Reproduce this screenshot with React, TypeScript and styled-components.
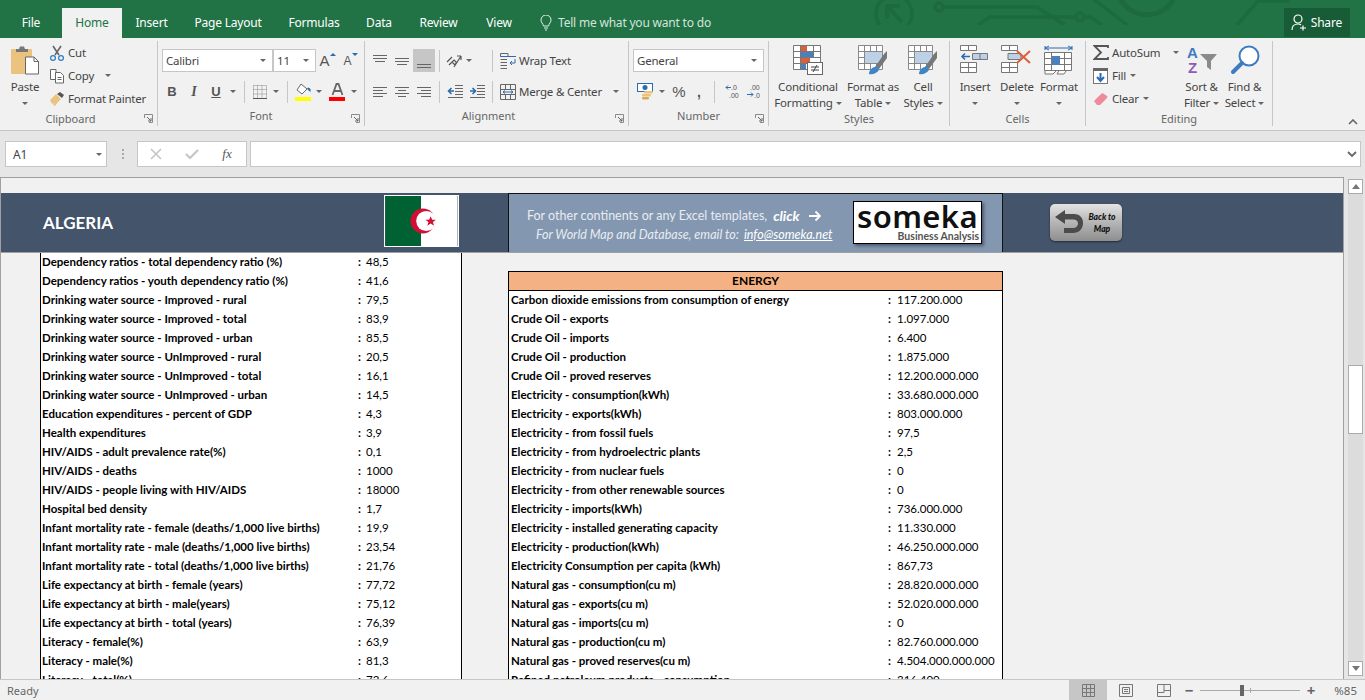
import React from 'react';
import styled, { createGlobalStyle } from 'styled-components';

const UI_FONT = '"Noto Sans", "Open Sans", sans-serif';
const CELL_FONT = 'Lato, "Open Sans", sans-serif';

const GlobalStyle = createGlobalStyle`
  html, body { margin: 0; padding: 0; overflow: hidden; background: #f1f1f1; }
  #root { width: 1365px; height: 700px; }
  * { box-sizing: border-box; }
`;

const Page = styled.div`
  display: flex;
  flex-direction: column;
  width: 1365px;
  height: 700px;
  overflow: hidden;
  font-family: ${UI_FONT};
  font-size: 11.5px;
  letter-spacing: -0.2px;
  color: #444;
`;

/* title bar */
const TitleBar = styled.div`
  position: relative;
  flex: none;
  display: flex;
  height: 38px;
  padding-top: 8px;
  background: #217346;
  color: #fff;
`;
const Tab = styled.div<{ $w: number; $active?: boolean }>`
  display: flex;
  align-items: center;
  justify-content: center;
  width: ${({ $w }) => $w}px;
  height: 30px;
  padding-bottom: 1px;
  font-size: 12px;
  background: ${({ $active }) => ($active ? '#f1f1f1' : 'transparent')};
  color: ${({ $active }) => ($active ? '#217346' : '#fff')};
`;
const TellMe = styled.div`
  display: flex;
  align-items: center;
  gap: 6px;
  height: 30px;
  margin-left: 14px;
  padding-bottom: 1px;
  font-size: 12px;
  color: #d3e3da;
`;
const Share = styled.div`
  display: flex;
  align-items: center;
  gap: 4px;
  height: 29px;
  margin-left: auto;
  margin-right: 15px;
  padding: 0 8px 0 7px;
  font-size: 12px;
  background: #185c37;
`;
const Watermark = styled.svg`
  position: absolute;
  left: 850px;
  top: 0;
`;

/* ribbon */
const Ribbon = styled.div`
  position: relative;
  flex: none;
  display: flex;
  height: 93px;
  padding-top: 3px;
  background: #f1f1f1;
  border-bottom: 1px solid #c6c6c6;
`;
const Group = styled.section<{ $w: number }>`
  position: relative;
  display: flex;
  flex-direction: column;
  width: ${({ $w }) => $w}px;
  height: 85px;
  border-right: 1px solid #c6c6c6;
`;
const GroupBody = styled.div<{ $pad?: number; $col?: boolean }>`
  display: flex;
  flex: 1;
  flex-direction: ${({ $col }) => ($col ? 'column' : 'row')};
  padding-left: ${({ $pad }) => $pad ?? 0}px;
`;
const GroupLabel = styled.div<{ $shift?: number }>`
  height: 15px;
  margin-bottom: 3px;
  padding-right: ${({ $shift }) => $shift ?? 0}px;
  text-align: center;
  font-size: 11px;
  line-height: 15px;
  letter-spacing: 0;
  color: #666;
`;
const Launcher = styled.svg`
  position: absolute;
  right: 4px;
  bottom: 3px;
`;
const BigButton = styled.div<{ $w: number }>`
  display: flex;
  flex: none;
  flex-direction: column;
  align-items: center;
  width: ${({ $w }) => $w}px;
  padding-top: 4px;
  line-height: 16px;
`;
const BigIcon = styled.div`
  display: flex;
  justify-content: center;
  height: 30px;
  margin-bottom: 4px;
`;
const BigText = styled.div`
  white-space: nowrap;
  text-align: center;
`;
const CaretLine = styled.div`
  display: flex;
  align-items: center;
  justify-content: center;
  height: 16px;
  gap: 3px;
  white-space: nowrap;
`;
const SmallColumn = styled.div<{ $ml?: number; $w?: number }>`
  display: flex;
  flex: none;
  flex-direction: column;
  margin-left: ${({ $ml }) => $ml ?? 0}px;
  width: ${({ $w }) => ($w ? `${$w}px` : 'auto')};
`;
const SmallRow = styled.div`
  display: flex;
  align-items: center;
  gap: 3px;
  height: 23px;
  white-space: nowrap;
`;
const SmallIcon = styled.span`
  display: flex;
  flex: none;
  justify-content: center;
  width: 17px;
`;
const Caret = styled.span<{ $ml?: number }>`
  flex: none;
  width: 0;
  height: 0;
  margin-left: ${({ $ml }) => $ml ?? 0}px;
  border-left: 3px solid transparent;
  border-right: 3px solid transparent;
  border-top: 3px solid #666;
`;
const ToolRow = styled.div<{ $mt: number }>`
  display: flex;
  align-items: center;
  margin-top: ${({ $mt }) => $mt}px;
  height: 23px;
`;
const Tool = styled.div<{ $w: number; $on?: boolean }>`
  display: flex;
  flex: none;
  align-items: center;
  justify-content: center;
  width: ${({ $w }) => $w}px;
  height: 23px;
  background: ${({ $on }) => ($on ? '#c6c6c6' : 'transparent')};
`;
const ToolSep = styled.span<{ $l: number; $r: number }>`
  flex: none;
  width: 1px;
  height: 22px;
  margin: 0 ${({ $r }) => $r}px 0 ${({ $l }) => $l}px;
  background: #c6c6c6;
`;
const Select = styled.div<{ $w: number }>`
  display: flex;
  flex: none;
  align-items: center;
  justify-content: space-between;
  width: ${({ $w }) => $w}px;
  height: 23px;
  padding: 0 6px 0 3px;
  background: #fff;
  border: 1px solid #c6c6c6;
  color: #444;
`;
const GlyphLetter = styled.span<{ $bold?: boolean; $italic?: boolean; $under?: boolean; $size?: number }>`
  font-family: "Liberation Serif", serif;
  font-family: ${({ $italic }) => ($italic ? '"Liberation Serif", serif' : '"Liberation Sans", sans-serif')};
  font-size: ${({ $size }) => $size ?? 13}px;
  font-weight: ${({ $bold }) => ($bold ? 700 : 400)};
  font-style: ${({ $italic }) => ($italic ? 'italic' : 'normal')};
  text-decoration: ${({ $under }) => ($under ? 'underline' : 'none')};
  color: #555;
  letter-spacing: 0;
`;
const ToolText = styled.span`
  margin-left: 3px;
  white-space: nowrap;
`;
const Collapse = styled.svg`
  position: absolute;
  right: 7px;
  bottom: 5px;
`;

/* formula bar */
const FormulaBar = styled.div`
  flex: none;
  display: flex;
  align-items: flex-start;
  height: 46px;
  padding: 10px 4px 0 5px;
  background: #e6e6e6;
`;
const NameBox = styled.div`
  display: flex;
  align-items: center;
  justify-content: space-between;
  width: 102px;
  height: 26px;
  padding: 0 4px 0 7px;
  background: #fff;
  border: 1px solid #c6c6c6;
  font-size: 12px;
`;
const Dots = styled.div`
  display: flex;
  flex-direction: column;
  gap: 2px;
  width: 30px;
  padding: 8px 0 0 15px;
  i { width: 2px; height: 2px; background: #a8a8a8; }
`;
const FormulaTools = styled.div`
  display: flex;
  align-items: center;
  width: 110px;
  height: 26px;
  margin-right: 3px;
  background: #fff;
  border: 1px solid #c6c6c6;
`;
const FormulaInput = styled.div`
  display: flex;
  flex: 1;
  align-items: center;
  justify-content: flex-end;
  height: 26px;
  padding-right: 3px;
  background: #fff;
  border: 1px solid #c6c6c6;
`;

/* worksheet */
const SheetArea = styled.div`
  flex: 1;
  display: flex;
  min-height: 0;
  background: #e6e6e6;
`;
const Sheet = styled.div`
  display: flex;
  flex-direction: column;
  width: 1344px;
  padding-top: 15px;
  background: #f1f1f1;
  border: 1px solid #a0a0a0;
  border-bottom: 0;
  overflow: hidden;
`;
const Banner = styled.div`
  flex: none;
  display: flex;
  height: 60px;
  background: #44546a;
  border-bottom: 1px solid #a0a0a0;
`;
const TitleBlock = styled.div`
  display: flex;
  align-items: center;
  justify-content: space-between;
  width: 507px;
  padding: 0 49px 0 42px;
  font-family: ${CELL_FONT};
  font-size: 17px;
  font-weight: 700;
  letter-spacing: 0;
  color: #fff;
`;
const FlagFrame = styled.svg`
  margin-top: -3px;
  border: 1px solid #fff;
`;
const Promo = styled.div`
  display: flex;
  flex: none;
  width: 495px;
  height: 59px;
  background: #8497b0;
  border: 1px solid #111;
  border-bottom: 0;
  font-family: ${CELL_FONT};
  letter-spacing: 0;
  color: #e8ecf2;
`;
const PromoText = styled.div`
  display: flex;
  flex-direction: column;
  width: 344px;
  padding: 12px 0 0 18px;
  font-size: 12.5px;
`;
const PromoLine = styled.div<{ $indent?: number; $italic?: boolean }>`
  display: flex;
  align-items: center;
  gap: ${({ $italic }) => ($italic ? 5 : 6)}px;
  height: 19px;
  padding-left: ${({ $indent }) => $indent ?? 0}px;
  font-style: ${({ $italic }) => ($italic ? 'italic' : 'normal')};
  white-space: nowrap;
`;
const ClickWord = styled.b`
  font-size: 14px;
  font-style: italic;
  color: #fff;
`;
const MailLink = styled.span`
  text-decoration: underline;
  color: #fff;
`;
const Logo = styled.div`
  position: relative;
  flex: none;
  width: 129px;
  height: 43px;
  margin-top: 7px;
  padding: 0 2px;
  background: #fff;
  border: 1px solid #000;
  box-shadow: 2px 2px 3px rgba(30, 40, 60, 0.55);
  overflow: hidden;
`;
const LogoWord = styled.div`
  font-family: "Noto Sans", sans-serif;
  font-size: 31px;
  font-weight: 600;
  line-height: 28px;
  letter-spacing: 0.4px;
  text-align: center;
  color: #111;
`;
const LogoSub = styled.div`
  font-family: ${CELL_FONT};
  font-size: 10.5px;
  font-weight: 700;
  line-height: 12px;
  text-align: right;
  color: #555;
`;
const BackButton = styled.div`
  display: flex;
  align-items: center;
  flex: none;
  width: 72px;
  height: 37px;
  margin: 11px 0 0 47px;
  padding-left: 3px;
  border-radius: 5px;
  background: linear-gradient(#e4e4e4, #b9b9b9 45%, #8e8e8e);
  box-shadow: 0 1px 2px rgba(0, 0, 0, 0.5);
`;
const BackText = styled.div`
  width: 34px;
  font-family: ${CELL_FONT};
  font-size: 8.5px;
  font-style: italic;
  font-weight: 900;
  line-height: 12px;
  letter-spacing: 0;
  text-align: center;
  color: #111;
`;
const Tables = styled.div`
  flex: 1;
  display: flex;
  align-items: flex-start;
  min-height: 0;
  overflow: hidden;
  padding-left: 39px;
  font-family: ${CELL_FONT};
  font-size: 11.5px;
  letter-spacing: 0;
  color: #000;
`;
const LeftTable = styled.div`
  flex: none;
  width: 422px;
  height: 600px;
  padding-left: 1px;
  background: #fff;
  border: solid #000;
  border-width: 0 1px;
`;
const RightColumn = styled.div`
  flex: none;
  width: 495px;
  margin: 18px 0 0 46px;
`;
const EnergyHead = styled.div`
  height: 20px;
  background: #f4b183;
  border: 1px solid #000;
  font-size: 12px;
  font-weight: 700;
  line-height: 18px;
  text-align: center;
`;
const RightTable = styled.div`
  height: 600px;
  padding-left: 2px;
  background: #fff;
  border: solid #000;
  border-width: 0 1px;
`;
const Row = styled.div<{ $label: number; $colon: number }>`
  display: grid;
  grid-template-columns: ${({ $label }) => $label}px ${({ $colon }) => $colon}px 1fr;
  height: 19px;
  line-height: 18px;
  white-space: nowrap;
`;
const RowLabel = styled.span`
  font-weight: 700;
`;
const RowColon = styled.span`
  font-weight: 700;
`;

/* scrollbar + status */
const ScrollBar = styled.div`
  position: relative;
  display: flex;
  flex-direction: column;
  justify-content: space-between;
  width: 15px;
  margin: 2px 0 3px 4px;
  background: #dcdcdc;
`;
const ScrollButton = styled.div`
  display: flex;
  align-items: center;
  justify-content: center;
  height: 15px;
  background: #fff;
  border: 1px solid #ababab;
`;
const ScrollThumb = styled.div`
  position: absolute;
  left: 0;
  top: 186px;
  width: 15px;
  height: 69px;
  background: #fff;
  border: 1px solid #ababab;
`;
const StatusBar = styled.div`
  flex: none;
  display: flex;
  align-items: center;
  height: 21px;
  padding-left: 7px;
  background: #f1f1f1;
  border-top: 1px solid #c6c6c6;
  font-size: 11px;
  letter-spacing: 0;
  color: #666;
`;
const StatusRight = styled.div`
  display: flex;
  align-items: center;
  height: 20px;
  margin-left: auto;
`;
const ViewButton = styled.div<{ $on?: boolean }>`
  display: flex;
  align-items: center;
  justify-content: center;
  width: 38px;
  height: 20px;
  margin-right: ${({ $on }) => ($on ? 0 : 0)}px;
  background: ${({ $on }) => ($on ? '#c6c6c6' : 'transparent')};
`;
const ZoomTrack = styled.div`
  position: relative;
  width: 100px;
  height: 1px;
  margin: 0 5px;
  background: #a8a8a8;
`;
const ZoomThumb = styled.span`
  position: absolute;
  left: 40px;
  top: -5px;
  width: 4px;
  height: 11px;
  background: #666;
`;
const ZoomTick = styled.span`
  position: absolute;
  left: 50px;
  top: -2px;
  width: 1px;
  height: 5px;
  background: #a8a8a8;
`;
const ZoomSign = styled.span`
  width: 12px;
  text-align: center;
  font-size: 15px;
  font-weight: 700;
  line-height: 14px;
  color: #666;
`;
const ZoomValue = styled.span`
  width: 48px;
  padding-right: 8px;
  text-align: right;
  font-size: 11.5px;
`;

const lines = (ys: number[], x1: number, x2: number) =>
  ys.map((y) => <path key={y} d={`M${x1} ${y + 0.5}H${x2}`} stroke="#666" />);

const AlignV = ({ at }: { at: 'top' | 'mid' | 'bot' }) => {
  const start = at === 'top' ? 2 : at === 'mid' ? 5 : 11;
  return <svg width="16" height="16">{lines([start, start + 3, start + (at === 'bot' ? 3 : 6)], 1, 15).slice(0, at === 'bot' ? 2 : 2)}{at === 'bot' ? null : lines([start + 6], 3, 13)}</svg>;
};
const AlignH = ({ at }: { at: 'l' | 'c' | 'r' }) => (
  <svg width="16" height="14">
    {[2, 5, 8, 11].map((y, i) => {
      const short = i % 2 === 1;
      const x1 = at === 'l' ? 1 : at === 'c' ? (short ? 4 : 1) : short ? 5 : 1;
      const x2 = at === 'l' ? (short ? 11 : 15) : at === 'c' ? (short ? 12 : 15) : 15;
      return <path key={y} d={`M${x1} ${y + 0.5}H${x2}`} stroke="#666" />;
    })}
  </svg>
);
const Indent = ({ dir }: { dir: 'in' | 'out' }) => (
  <svg width="17" height="14">
    <path d="M8 1.5H16M8 4.5H16M8 7.5H16M8 10.5H16M1 13.5H16" stroke="#666" transform="translate(0 -1)" />
    {dir === 'out'
      ? <path d="M7 6H2M4.5 3L1.5 6L4.5 9" stroke="#2b6cb0" strokeWidth="1.6" fill="none" />
      : <path d="M1 6H6M3.5 3L6.5 6L3.5 9" stroke="#2b6cb0" strokeWidth="1.6" fill="none" />}
  </svg>
);
const PasteIcon = () => (
  <svg width="30" height="30" viewBox="0 0 30 30">
    <rect x="1" y="4" width="21" height="25" rx="1" fill="#eac37f" />
    <path d="M6 4H9L10 1.5H14L15 4H18V7H6Z" fill="#777" />
    <path d="M15.5 12H24L28.5 16.5V29H15.5Z" fill="#fff" stroke="#666" />
    <path d="M24 12V16.5H28.5" fill="none" stroke="#666" />
  </svg>
);
const CutIcon = () => (
  <svg width="16" height="16" viewBox="0 0 16 16">
    <path d="M4 1L10 10M12 1L6 10" stroke="#666" strokeWidth="1.6" />
    <circle cx="4" cy="13" r="2.4" fill="none" stroke="#2b7cc4" strokeWidth="1.2" />
    <circle cx="12" cy="13" r="2.4" fill="none" stroke="#2b7cc4" strokeWidth="1.2" />
  </svg>
);
const CopyIcon = () => (
  <svg width="16" height="16" viewBox="0 0 16 16">
    <path d="M1.5 1.5H7V11.5H1.5Z" fill="#fff" stroke="#666" />
    <path d="M6.5 4.5H11.5L14.5 7.5V15H6.5Z" fill="#fff" stroke="#666" />
    <path d="M8.5 9.5H12.5M8.5 11.5H12.5" stroke="#666" />
  </svg>
);
const PainterIcon = () => (
  <svg width="16" height="16" viewBox="0 0 16 16">
    <path d="M1 9L7 3L12 8L9 11L6 15L4 14L5 12L3 13Z" fill="#eac37f" />
    <path d="M8 3L11 1L15 4L13 7Z" fill="#555" />
  </svg>
);
const SmallA = ({ size, up }: { size: number; up: boolean }) => (
  <Tool $w={up ? 23 : 23}>
    <GlyphLetter $size={size}>A</GlyphLetter>
    <svg width="6" height="12" style={{ marginTop: -8 }}>
      <path d={up ? 'M0 5L3 2L6 5Z' : 'M0 2L6 2L3 5Z'} fill="#2b6cb0" />
    </svg>
  </Tool>
);
const BordersIcon = () => (
  <svg width="14" height="14">
    <path d="M.5 .5H13.5V13.5M.5 .5V13.5M.5 4.5H13.5M.5 9H13.5M4.5 .5V13M9 .5V13" stroke="#888" strokeDasharray="1 1" fill="none" />
    <path d="M0 13.5H14" stroke="#555" />
  </svg>
);
const FillIcon = () => (
  <svg width="17" height="18" viewBox="0 0 17 18">
    <path d="M6 1L12 6L7 11L2 7Z" fill="#fff" stroke="#666" />
    <path d="M12 5C15 4 16 6 15.5 9L13 7Z" fill="#2b6cb0" />
    <rect x="0" y="14" width="16" height="4" fill="#ffff00" />
  </svg>
);
const FontColorIcon = () => (
  <svg width="17" height="18" viewBox="0 0 17 18">
    <path d="M3.5 12L7.5 1H9.5L13.5 12M5 8H12" stroke="#666" strokeWidth="1.8" fill="none" />
    <rect x="0" y="14" width="16" height="4" fill="#ff0000" />
  </svg>
);
const OrientIcon = () => (
  <svg width="18" height="16" viewBox="0 0 18 16">
    <path d="M2 9L7 4M4 12L9 7L11 9C12 10 10 12 9 11L7 9M9 14L16 3M16 3V7M16 3H12" stroke="#555" fill="none" strokeWidth="1.2" />
  </svg>
);
const WrapIcon = () => (
  <svg width="16" height="16" viewBox="0 0 16 16">
    <path d="M.5 .5H8V3.5H.5ZM.5 6.5H7M.5 9.5H7M.5 12.5H7" fill="none" stroke="#666" />
    <path d="M.5 3.5H16M15 6V10H10M12 8L10 10L12 12" fill="none" stroke="#2b6cb0" />
    <path d="M.5 15.5H7" stroke="#666" />
  </svg>
);
const MergeIcon = () => (
  <svg width="16" height="16" viewBox="0 0 16 16">
    <path d="M.5 .5H15.5V15.5H.5ZM.5 5.5H15.5M.5 10.5H15.5M5.5 .5V5M10.5 .5V5M5.5 11V15M10.5 11V15" fill="none" stroke="#666" />
    <path d="M3 8H13M5 6.5L3 8L5 9.5M11 6.5L13 8L11 9.5" fill="none" stroke="#2b6cb0" />
  </svg>
);
const MoneyIcon = () => (
  <svg width="17" height="17" viewBox="0 0 17 17">
    <rect x=".5" y=".5" width="15" height="8" fill="#fff" stroke="#2b6cb0" />
    <circle cx="8" cy="4.5" r="2.5" fill="#2b6cb0" />
    <rect x="7" y="8" width="9" height="2.5" rx="1" fill="#eac37f" />
    <rect x="5" y="11" width="9" height="2.5" rx="1" fill="#eac37f" />
    <rect x="5" y="14" width="7" height="2.5" rx="1" fill="#d9a95a" />
  </svg>
);
const DecimalIcon = ({ inc }: { inc: boolean }) => (
  <svg width="16" height="15" viewBox="0 0 16 15">
    <text x={inc ? 4 : 6} y="6" fontFamily="Liberation Sans" fontSize="7" fill="#555" letterSpacing="0">{inc ? '.00' : '.0'}</text>
    <text x={inc ? 8 : 4} y="14" fontFamily="Liberation Sans" fontSize="7" fill="#555" letterSpacing="0">{inc ? '.0' : '.00'}</text>
    {inc
      ? <path d="M1 10.5H7M5 8.5L7 10.5L5 12.5" fill="none" stroke="#2b6cb0" />
      : <path d="M1 3.5H6M3 1.5L1 3.5L3 5.5" fill="none" stroke="#2b6cb0" />}
  </svg>
);
const CondIcon = () => (
  <svg width="30" height="30" viewBox="0 0 30 30">
    <path d="M.5 .5H27.5V24.5H.5ZM7.5 .5V24M20.5 .5V12M.5 6.5H27M.5 12.5H27M.5 18.5H15" fill="#fff" stroke="#777" />
    <rect x="8" y="1" width="6" height="5" fill="#d9603a" />
    <rect x="8" y="7" width="12" height="5" fill="#4a80bd" />
    <rect x="8" y="13" width="9" height="5" fill="#d9603a" />
    <rect x="8" y="19" width="5" height="5" fill="#4a80bd" />
    <rect x="14.5" y="17.5" width="15" height="12" fill="#fff" stroke="#666" />
    <path d="M18 22H26M18 25H26M24 20L20 27" stroke="#444" fill="none" />
  </svg>
);
const TableIcon = () => (
  <svg width="30" height="30" viewBox="0 0 30 30">
    <path d="M.5 .5H24.5V24.5H.5ZM6.5 .5V24M12.5 .5V24M18.5 .5V24M.5 6.5H24M.5 12.5H24M.5 18.5H24" fill="#fff" stroke="#888" />
    <rect x="7" y="7" width="17" height="11" fill="#bcd0e6" />
    <path d="M17 22L26 9L29 6V13L21 24Z" fill="#777" />
    <path d="M11 29C11 25 15 21 20 22L21 25C19 28 15 30 11 29Z" fill="#3d86c6" />
  </svg>
);
const InsertIcon = () => (
  <svg width="30" height="30" viewBox="0 0 30 30">
    <path d="M.5 .5H16.5V5.5H.5ZM8.5 .5V5M.5 17.5H16.5V27.5H.5ZM.5 22.5H16.5M8.5 17.5V27" fill="#fff" stroke="#777" />
    <path d="M12.5 8.5H27.5V14.5H12.5ZM20 8.5V14" fill="#bcd0e6" stroke="#777" />
    <path d="M10 11.5H2M5 8.5L2 11.5L5 14.5" fill="none" stroke="#2b6cb0" strokeWidth="1.6" />
  </svg>
);
const DeleteIcon = () => (
  <svg width="32" height="30" viewBox="0 0 32 30">
    <path d="M.5 .5H16.5V5.5H.5ZM8.5 .5V5M.5 17.5H16.5V27.5H.5ZM.5 22.5H16.5M8.5 17.5V27" fill="#fff" stroke="#777" />
    <path d="M7 8.5H20V14.5H7Z" fill="#bcd0e6" stroke="#777" />
    <path d="M16 6L29 18M29 6L16 18" stroke="#d9603a" strokeWidth="2" />
  </svg>
);
const FormatIcon = () => (
  <svg width="30" height="30" viewBox="0 0 30 30">
    <path d="M1 3H28M1 1V5M28 1V5M5 1L1 3L5 5M24 1L28 3L24 5" fill="none" stroke="#2b6cb0" />
    <path d="M.5 7.5H27.5V25.5H.5ZM7.5 7.5V25M20.5 7.5V25M.5 13.5H27M.5 19.5H27" fill="#fff" stroke="#777" />
    <rect x="8" y="11" width="8" height="9" fill="#4a80bd" />
    <path d="M1 26V29H9L12 26M15 26L13 29H20L22 26" fill="#fff" stroke="#777" />
  </svg>
);
const SigmaIcon = () => (
  <svg width="16" height="15" viewBox="0 0 16 15">
    <path d="M15 3V1H1.5L8 7.5L1.5 14H15V12" fill="none" stroke="#555" strokeWidth="1.8" />
  </svg>
);
const FillDownIcon = () => (
  <svg width="15" height="16" viewBox="0 0 15 16">
    <rect x=".5" y=".5" width="14" height="15" fill="#fff" stroke="#777" />
    <rect x="0" y="0" width="15" height="3" fill="#666" />
    <path d="M7.5 5V12M4 9L7.5 13L11 9" fill="none" stroke="#2b6cb0" strokeWidth="2" />
  </svg>
);
const EraserIcon = () => (
  <svg width="15" height="14" viewBox="0 0 15 14">
    <path d="M1 9L8 2C9 1 10 1 11 2L14 4C15 5 14 6 13 7L7 13H4Z" fill="#ef8a9a" />
  </svg>
);
const SortIcon = () => (
  <svg width="30" height="30" viewBox="0 0 30 30">
    <text x="0" y="13" fontFamily="Liberation Sans" fontWeight="700" fontSize="15" fill="#3d7cc0" letterSpacing="0">A</text>
    <text x="1" y="28" fontFamily="Liberation Sans" fontWeight="700" fontSize="15" fill="#8d5cb8" letterSpacing="0">Z</text>
    <path d="M13 9H30L24 16V25L20 22V16Z" fill="#8a8a8a" />
  </svg>
);
const FindIcon = () => (
  <svg width="30" height="30" viewBox="0 0 30 30">
    <circle cx="19" cy="11" r="9.5" fill="#fff" stroke="#3d7cc0" strokeWidth="2" />
    <path d="M12 18L3 27" stroke="#3d7cc0" strokeWidth="4" strokeLinecap="round" />
  </svg>
);
const launcher = (
  <Launcher width="9" height="9" viewBox="0 0 9 9">
    <path d="M.5 4V.5H8.5V8.5H5" fill="none" stroke="#8a8a8a" />
    <path d="M3 3L7 7M7 4V7H4" fill="none" stroke="#666" />
  </Launcher>
);

const leftRows: [string, string][] = [
  ['Dependency ratios - total dependency ratio (%)', '48,5'],
  ['Dependency ratios - youth dependency ratio (%)', '41,6'],
  ['Drinking water source - Improved - rural', '79,5'],
  ['Drinking water source - Improved - total', '83,9'],
  ['Drinking water source - Improved - urban', '85,5'],
  ['Drinking water source - UnImproved - rural', '20,5'],
  ['Drinking water source - UnImproved - total', '16,1'],
  ['Drinking water source - UnImproved - urban', '14,5'],
  ['Education expenditures - percent of GDP', '4,3'],
  ['Health expenditures', '3,9'],
  ['HIV/AIDS - adult prevalence rate(%)', '0,1'],
  ['HIV/AIDS - deaths', '1000'],
  ['HIV/AIDS - people living with HIV/AIDS', '18000'],
  ['Hospital bed density', '1,7'],
  ['Infant mortality rate - female (deaths/1,000 live births)', '19,9'],
  ['Infant mortality rate - male (deaths/1,000 live births)', '23,54'],
  ['Infant mortality rate - total (deaths/1,000 live births)', '21,76'],
  ['Life expectancy at birth - female (years)', '77,72'],
  ['Life expectancy at birth - male(years)', '75,12'],
  ['Life expectancy at birth - total (years)', '76,39'],
  ['Literacy - female(%)', '63,9'],
  ['Literacy - male(%)', '81,3'],
  ['Literacy - total(%)', '72,6'],
];

const rightRows: [string, string][] = [
  ['Carbon dioxide emissions from consumption of energy', '117.200.000'],
  ['Crude Oil - exports', '1.097.000'],
  ['Crude Oil - imports', '6.400'],
  ['Crude Oil - production', '1.875.000'],
  ['Crude Oil - proved reserves', '12.200.000.000'],
  ['Electricity - consumption(kWh)', '33.680.000.000'],
  ['Electricity - exports(kWh)', '803.000.000'],
  ['Electricity - from fossil fuels', '97,5'],
  ['Electricity - from hydroelectric plants', '2,5'],
  ['Electricity - from nuclear fuels', '0'],
  ['Electricity - from other renewable sources', '0'],
  ['Electricity - imports(kWh)', '736.000.000'],
  ['Electricity - installed generating capacity', '11.330.000'],
  ['Electricity - production(kWh)', '46.250.000.000'],
  ['Electricity Consumption per capita (kWh)', '867,73'],
  ['Natural gas - consumption(cu m)', '28.820.000.000'],
  ['Natural gas - exports(cu m)', '52.020.000.000'],
  ['Natural gas - imports(cu m)', '0'],
  ['Natural gas - production(cu m)', '82.760.000.000'],
  ['Natural gas - proved reserves(cu m)', '4.504.000.000.000'],
  ['Refined petroleum products - consumption', '316.400'],
];

const tabs: [string, number][] = [
  ['File', 62],
  ['Home', 60],
  ['Insert', 59],
  ['Page Layout', 94],
  ['Formulas', 78],
  ['Data', 52],
  ['Review', 67],
  ['View', 54],
];

function Big({ icon, w, l1, l2 }: { icon: React.ReactNode; w: number; l1: string; l2?: string }) {
  return (
    <BigButton $w={w}>
      <BigIcon>{icon}</BigIcon>
      {l2 ? <BigText>{l1}</BigText> : <BigText>{l1}</BigText>}
      <CaretLine>
        {l2}
        <Caret />
      </CaretLine>
    </BigButton>
  );
}

export default function App() {
  return (
    <Page>
      <GlobalStyle />
      <TitleBar>
        {tabs.map(([name, w]) => (
          <Tab key={name} $w={w} $active={name === 'Home'}>{name}</Tab>
        ))}
        <TellMe>
          <svg width="12" height="16" viewBox="0 0 12 16">
            <path d="M3.5 11C3 8.5 1 7.5 1 5A5 5 0 0 1 11 5C11 7.5 9 8.5 8.5 11ZM4 13H8M5 15H7" fill="none" stroke="#e6efe9" />
          </svg>
          Tell me what you want to do
        </TellMe>
        <Watermark width="440" height="25" viewBox="0 0 440 25">
          <g fill="none" stroke="#1d6a3f" strokeWidth="3.5">
            <path d="M30 25A18 18 0 1 1 58 25" />
            <path d="M52 22L39 8M37 19V6H50" strokeWidth="4" />
            <circle cx="89" cy="7" r="4" />
            <path d="M93 7H187L215 25" />
            <path d="M128 25L140 17H226" />
            <circle cx="230" cy="17" r="4" />
            <path d="M234 17H240L252 25" />
            <path d="M242 -2L277 25" />
            <path d="M270 -3A28 24 0 0 0 324 -3" strokeWidth="5" />
            <path d="M387 25L408 1H440" />
          </g>
        </Watermark>
        <Share>
          <svg width="16" height="17" viewBox="0 0 16 17">
            <circle cx="7" cy="5" r="4" fill="none" stroke="#fff" strokeWidth="1.2" />
            <path d="M1 16C1 12 3 10 7 10C8.5 10 9.5 10.5 10 11M9 14H15M12 11.5V16.5" fill="none" stroke="#fff" strokeWidth="1.2" />
          </svg>
          Share
        </Share>
      </TitleBar>

      <Ribbon>
        <Group $w={158}>
          <GroupBody $pad={8}>
            <BigButton $w={34}>
              <BigIcon><PasteIcon /></BigIcon>
              <BigText>Paste</BigText>
              <CaretLine><Caret /></CaretLine>
            </BigButton>
            <SmallColumn $ml={6}>
              <SmallRow><SmallIcon><CutIcon /></SmallIcon>Cut</SmallRow>
              <SmallRow><SmallIcon><CopyIcon /></SmallIcon>Copy<Caret $ml={8} /></SmallRow>
              <SmallRow><SmallIcon><PainterIcon /></SmallIcon>Format Painter</SmallRow>
            </SmallColumn>
          </GroupBody>
          <GroupLabel $shift={16}>Clipboard</GroupLabel>
          {launcher}
        </Group>

        <Group $w={207}>
          <GroupBody $pad={4} $col>
            <ToolRow $mt={8}>
              <Select $w={111}>Calibri<Caret /></Select>
              <Select $w={43}>11<Caret /></Select>
              <SmallA size={15} up />
              <SmallA size={12} up={false} />
            </ToolRow>
            <ToolRow $mt={8}>
              <Tool $w={20}><GlyphLetter $bold>B</GlyphLetter></Tool>
              <Tool $w={24}><GlyphLetter $bold $italic $size={14}>I</GlyphLetter></Tool>
              <Tool $w={20}><GlyphLetter $bold $under>U</GlyphLetter></Tool>
              <Tool $w={14}><Caret /></Tool>
              <ToolSep $l={4} $r={4} />
              <Tool $w={21}><BordersIcon /></Tool>
              <Tool $w={12}><Caret /></Tool>
              <ToolSep $l={5} $r={5} />
              <Tool $w={20}><FillIcon /></Tool>
              <Tool $w={12}><Caret /></Tool>
              <Tool $w={24}><FontColorIcon /></Tool>
              <Tool $w={10}><Caret /></Tool>
            </ToolRow>
          </GroupBody>
          <GroupLabel>Font</GroupLabel>
          {launcher}
        </Group>

        <Group $w={264}>
          <GroupBody $pad={4} $col>
            <ToolRow $mt={8}>
              <Tool $w={22}><AlignV at="top" /></Tool>
              <Tool $w={22}><AlignV at="mid" /></Tool>
              <Tool $w={22} $on><AlignV at="bot" /></Tool>
              <ToolSep $l={4} $r={4} />
              <Tool $w={20}><OrientIcon /></Tool>
              <Tool $w={10}><Caret /></Tool>
              <ToolSep $l={18} $r={7} />
              <WrapIcon />
              <ToolText>Wrap Text</ToolText>
            </ToolRow>
            <ToolRow $mt={8}>
              <Tool $w={22}><AlignH at="l" /></Tool>
              <Tool $w={22}><AlignH at="c" /></Tool>
              <Tool $w={22}><AlignH at="r" /></Tool>
              <ToolSep $l={4} $r={4} />
              <Tool $w={22}><Indent dir="out" /></Tool>
              <Tool $w={22}><Indent dir="in" /></Tool>
              <ToolSep $l={4} $r={7} />
              <MergeIcon />
              <ToolText>Merge &amp; Center</ToolText>
              <Caret $ml={11} />
            </ToolRow>
          </GroupBody>
          <GroupLabel $shift={16}>Alignment</GroupLabel>
          {launcher}
        </Group>

        <Group $w={140}>
          <GroupBody $pad={4} $col>
            <ToolRow $mt={8}>
              <Select $w={131}>General<Caret /></Select>
            </ToolRow>
            <ToolRow $mt={8}>
              <Tool $w={24}><MoneyIcon /></Tool>
              <Tool $w={10}><Caret /></Tool>
              <Tool $w={24}><GlyphLetter $size={15}>%</GlyphLetter></Tool>
              <Tool $w={16}><GlyphLetter $bold $size={14}>,</GlyphLetter></Tool>
              <ToolSep $l={7} $r={7} />
              <Tool $w={22}><DecimalIcon inc={false} /></Tool>
              <Tool $w={20}><DecimalIcon inc /></Tool>
            </ToolRow>
          </GroupBody>
          <GroupLabel>Number</GroupLabel>
          {launcher}
        </Group>

        <Group $w={181}>
          <GroupBody>
            <Big w={78} icon={<CondIcon />} l1="Conditional" l2="Formatting" />
            <Big w={52} icon={<TableIcon />} l1="Format as" l2="Table" />
            <Big w={48} icon={<TableIcon />} l1="Cell" l2="Styles" />
          </GroupBody>
          <GroupLabel>Styles</GroupLabel>
        </Group>

        <Group $w={136}>
          <GroupBody $pad={4}>
            <Big w={42} icon={<InsertIcon />} l1="Insert" />
            <Big w={42} icon={<DeleteIcon />} l1="Delete" />
            <Big w={42} icon={<FormatIcon />} l1="Format" />
          </GroupBody>
          <GroupLabel>Cells</GroupLabel>
        </Group>

        <Group $w={187}>
          <GroupBody $pad={6}>
            <SmallColumn $w={88}>
              <SmallRow><SmallIcon><SigmaIcon /></SmallIcon>AutoSum<Caret $ml={10} /></SmallRow>
              <SmallRow><SmallIcon><FillDownIcon /></SmallIcon>Fill<Caret $ml={1} /></SmallRow>
              <SmallRow><SmallIcon><EraserIcon /></SmallIcon>Clear<Caret $ml={1} /></SmallRow>
            </SmallColumn>
            <Big w={43} icon={<SortIcon />} l1="Sort &" l2="Filter" />
            <Big w={43} icon={<FindIcon />} l1="Find &" l2="Select" />
          </GroupBody>
          <GroupLabel>Editing</GroupLabel>
        </Group>

        <Collapse width="10" height="6" viewBox="0 0 10 6">
          <path d="M1 5L5 1L9 5" fill="none" stroke="#666" strokeWidth="1.6" />
        </Collapse>
      </Ribbon>

      <FormulaBar>
        <NameBox>A1<Caret /></NameBox>
        <Dots><i /><i /><i /></Dots>
        <FormulaTools>
          <Tool $w={36}>
            <svg width="12" height="12"><path d="M1 1L11 11M11 1L1 11" stroke="#c6c6c6" strokeWidth="1.6" /></svg>
          </Tool>
          <Tool $w={36}>
            <svg width="14" height="12"><path d="M1 6L5 10L13 2" fill="none" stroke="#c6c6c6" strokeWidth="2.2" /></svg>
          </Tool>
          <Tool $w={34}><GlyphLetter $italic $size={13}>fx</GlyphLetter></Tool>
        </FormulaTools>
        <FormulaInput>
          <svg width="10" height="7"><path d="M1 1L5 5L9 1" fill="none" stroke="#666" strokeWidth="1.8" /></svg>
        </FormulaInput>
      </FormulaBar>

      <SheetArea>
        <Sheet>
          <Banner>
            <TitleBlock>
              ALGERIA
              <FlagFrame width="75" height="52" viewBox="0 0 75 52">
                <rect width="37" height="52" fill="#006233" />
                <rect x="37" width="38" height="52" fill="#fff" />
                <circle cx="39" cy="26" r="13" fill="#d21034" />
                <circle cx="42.5" cy="26" r="10.5" fill="#fff" />
                <path d="M47 21L48.6 24.6L52.5 24.6L49.4 27L50.5 31L47 28.7L43.6 31L44.7 27L41.5 24.6L45.4 24.6Z" fill="#d21034" />
              </FlagFrame>
            </TitleBlock>
            <Promo>
              <PromoText>
                <PromoLine>
                  For other continents or any Excel templates,
                  <ClickWord>click</ClickWord>
                  <svg width="14" height="12" viewBox="0 0 14 12" style={{ marginLeft: 2 }}>
                    <path d="M1 6H12M7.5 1.5L12 6L7.5 10.5" fill="none" stroke="#fff" strokeWidth="1.8" />
                  </svg>
                </PromoLine>
                <PromoLine $indent={9} $italic>
                  For World Map and Database, email to:
                  <MailLink>info@someka.net</MailLink>
                </PromoLine>
              </PromoText>
              <Logo>
                <LogoWord>someka</LogoWord>
                <LogoSub>Business Analysis</LogoSub>
              </Logo>
            </Promo>
            <BackButton>
              <svg width="32" height="28" viewBox="0 0 32 28">
                <path d="M2 8L12 1V5H21C27 5 30 9 30 14C30 20 26 24 20 24H11V19H20C23 19 25 17 25 14.5C25 12 23 10.5 20 10.5H12V15Z" fill="#4b4b4b" />
              </svg>
              <BackText>Back to Map</BackText>
            </BackButton>
          </Banner>
          <Tables>
            <LeftTable>
              {leftRows.map(([label, value]) => (
                <Row key={label} $label={316} $colon={8}>
                  <RowLabel>{label}</RowLabel>
                  <RowColon>:</RowColon>
                  <span>{value}</span>
                </Row>
              ))}
            </LeftTable>
            <RightColumn>
              <EnergyHead>ENERGY</EnergyHead>
              <RightTable>
                {rightRows.map(([label, value]) => (
                  <Row key={label} $label={377} $colon={9}>
                    <RowLabel>{label}</RowLabel>
                    <RowColon>:</RowColon>
                    <span>{value}</span>
                  </Row>
                ))}
              </RightTable>
            </RightColumn>
          </Tables>
        </Sheet>
        <ScrollBar>
          <ScrollButton>
            <svg width="8" height="5"><path d="M0 5L4 0L8 5Z" fill="#777" /></svg>
          </ScrollButton>
          <ScrollThumb />
          <ScrollButton>
            <svg width="8" height="5"><path d="M0 0L8 0L4 5Z" fill="#777" /></svg>
          </ScrollButton>
        </ScrollBar>
      </SheetArea>

      <StatusBar>
        Ready
        <StatusRight>
          <ViewButton $on>
            <svg width="13" height="13"><path d="M.5 .5H12.5V12.5H.5ZM4.5 .5V12M8.5 .5V12M.5 4.5H12M.5 8.5H12" fill="none" stroke="#777" /></svg>
          </ViewButton>
          <ViewButton>
            <svg width="14" height="13"><path d="M.5 .5H13.5V12.5H.5Z" fill="none" stroke="#777" /><path d="M3.5 3.5H10.5V9.5H3.5ZM5 5.5H9M5 7.5H9" fill="none" stroke="#777" /></svg>
          </ViewButton>
          <ViewButton>
            <svg width="14" height="13"><path d="M.5 .5H13.5V12.5H.5ZM.5 8.5H7V.5M7 6.5H13" fill="none" stroke="#777" /></svg>
          </ViewButton>
          <ZoomSign>−</ZoomSign>
          <ZoomTrack><ZoomThumb /><ZoomTick /></ZoomTrack>
          <ZoomSign>+</ZoomSign>
          <ZoomValue>%85</ZoomValue>
        </StatusRight>
      </StatusBar>
    </Page>
  );
}
